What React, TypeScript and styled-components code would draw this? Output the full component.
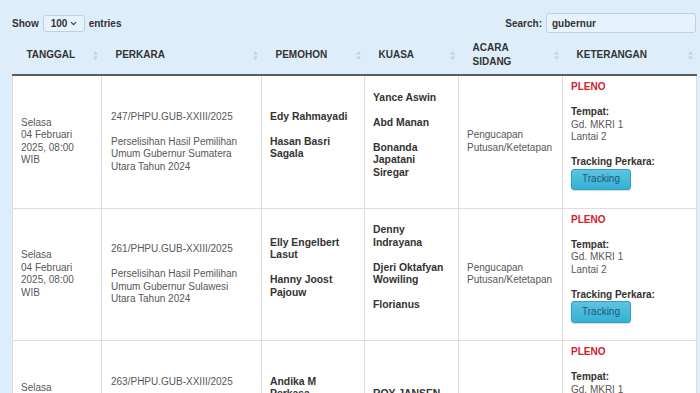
import React from 'react';
import styled, {createGlobalStyle} from 'styled-components';
import {ChevronDown} from 'lucide-react';

type Hearing = {
    day: string;
    date: string;
    number: string;
    title: string;
    pemohon: string[];
    kuasa: string[];
    acara: string;
};

const hearings: Hearing[] = [
    {
        day: 'Selasa',
        date: '04 Februari 2025, 08:00 WIB',
        number: '247/PHPU.GUB-XXIII/2025',
        title: 'Perselisihan Hasil Pemilihan Umum Gubernur Sumatera Utara Tahun 2024',
        pemohon: ['Edy Rahmayadi', 'Hasan Basri Sagala'],
        kuasa: ['Yance Aswin', 'Abd Manan', 'Bonanda Japatani Siregar'],
        acara: 'Pengucapan Putusan/Ketetapan',
    },
    {
        day: 'Selasa',
        date: '04 Februari 2025, 08:00 WIB',
        number: '261/PHPU.GUB-XXIII/2025',
        title: 'Perselisihan Hasil Pemilihan Umum Gubernur Sulawesi Utara Tahun 2024',
        pemohon: ['Elly Engelbert Lasut', 'Hanny Joost Pajouw'],
        kuasa: ['Denny Indrayana', 'Djeri Oktafyan Wowiling', 'Florianus'],
        acara: 'Pengucapan Putusan/Ketetapan',
    },
    {
        day: 'Selasa',
        date: '04 Februari 2025, 08:00 WIB',
        number: '263/PHPU.GUB-XXIII/2025',
        title: 'Perselisihan Hasil Pemilihan Umum Gubernur Jawa Tengah Tahun 2024',
        pemohon: ['Andika M Perkasa', 'Hendrar Prihadi'],
        kuasa: ['ROY JANSEN SIAGIAN'],
        acara: 'Pengucapan Putusan/Ketetapan',
    },
];

const columns = [
    {label: 'TANGGAL', width: 89},
    {label: 'PERKARA', width: 160},
    {label: 'PEMOHON', width: 103},
    {label: 'KUASA', width: 94},
    {label: 'ACARA SIDANG', width: 104},
    {label: 'KETERANGAN', width: 134},
];

const SortIcon = () => (
    <svg width="5" height="9" viewBox="0 0 5 9">
        <polygon points="2.5,0 5,3.5 0,3.5" fill="#c6d0d6"/>
        <polygon points="0,5.5 5,5.5 2.5,9" fill="#c6d0d6"/>
    </svg>
);

export default function App() {
    return (
        <>
            <GlobalStyle/>
            <Page>
                <Toolbar>
                    <Control>
                        Show
                        <FakeSelect>
                            100
                            <ChevronDown size={9} strokeWidth={3}/>
                        </FakeSelect>
                        entries
                    </Control>
                    <Control>
                        Search:
                        <SearchInput type="text" value="gubernur" readOnly/>
                    </Control>
                </Toolbar>

                <Table>
                    <colgroup>
                        {columns.map(c => <col key={c.label} style={{width: c.width}}/>)}
                    </colgroup>
                    <thead>
                    <tr>
                        {columns.map(c => (
                            <HeadCell key={c.label}>
                                <HeadInner>
                                    <HeadLabel>{c.label}</HeadLabel>
                                    <SortIcon/>
                                </HeadInner>
                            </HeadCell>
                        ))}
                    </tr>
                    </thead>
                    <tbody>
                    {hearings.map(h => (
                        <tr key={h.number}>
                            <Cell>
                                <div>{h.day}</div>
                                <div>{h.date}</div>
                            </Cell>
                            <Cell padLeft={9} padRight={10}>
                                <Block>{h.number}</Block>
                                <div>{h.title}</div>
                            </Cell>
                            <Cell>
                                {h.pemohon.map(n => <Name key={n}>{n}</Name>)}
                            </Cell>
                            <Cell>
                                {h.kuasa.map(n => <Name key={n}>{n}</Name>)}
                            </Cell>
                            <Cell>{h.acara}</Cell>
                            <Cell>
                                <Status>PLENO</Status>
                                <Block>
                                    <Label>Tempat:</Label>
                                    <div>Gd. MKRI 1</div>
                                    <div>Lantai 2</div>
                                </Block>
                                <Label>Tracking Perkara:</Label>
                                <ButtonRow>
                                    <TrackingBtn type="button">Tracking</TrackingBtn>
                                </ButtonRow>
                            </Cell>
                        </tr>
                    ))}
                    </tbody>
                </Table>
            </Page>
        </>
    );
}

const GlobalStyle = createGlobalStyle`
    html, body {
        margin: 0;
        background: #ddeefa;
        overflow: hidden;
    }

    body {
        font-family: "Liberation Sans", Arial, sans-serif;
    }
`

const Page = styled.div`
    padding: 13px 4px 0 12px;
`

const Toolbar = styled.div`
    display: flex;
    justify-content: space-between;
    align-items: center;
    height: 20px;
    margin-bottom: 3px;
`

const Control = styled.label`
    display: flex;
    align-items: center;
    gap: 4px;
    font-size: 10px;
    font-weight: bold;
    color: #333;
`

const FakeSelect = styled.span`
    display: flex;
    align-items: center;
    justify-content: space-between;
    box-sizing: border-box;
    width: 42px;
    height: 17px;
    padding: 0 6px 0 7px;
    border: 1px solid #bfd1de;
    border-radius: 3px;
    background: #e6f3fc;
    color: #333;
`

const SearchInput = styled.input`
    box-sizing: border-box;
    width: 150px;
    height: 20px;
    padding: 0 5px;
    border: 1px solid #bfd1de;
    border-radius: 3px;
    background: #e6f3fc;
    font-family: "Liberation Sans", Arial, sans-serif;
    font-size: 10px;
    font-weight: bold;
    color: #333;
    outline: none;
`

const Table = styled.table`
    width: 684px;
    border-collapse: collapse;
    table-layout: fixed;
    font-size: 10px;
    line-height: 12.5px;
    color: #585858;
`

const HeadCell = styled.th`
    padding: 5px 4px 5px 14px;
    border-bottom: 2px solid #5b5d5f;
    text-align: left;
    vertical-align: middle;
    font-weight: bold;
    font-size: 10px;
    line-height: 14px;
    color: #333;
`

const HeadInner = styled.div`
    display: flex;
    align-items: center;
    justify-content: space-between;
    gap: 8px;
`

const HeadLabel = styled.span`
    min-width: 0;
`

const Cell = styled.td<{ padLeft?: number; padRight?: number }>`
    padding: 5px ${p => p.padRight ?? 8}px 5px ${p => p.padLeft ?? 8}px;
    border: 1px solid #dddddd;
    background: #fff;
    vertical-align: middle;
    overflow-wrap: break-word;
`

const Block = styled.div`
    margin-bottom: 12.5px;
`

const Name = styled.div`
    margin-bottom: 12.5px;
    font-weight: bold;
    font-size: 10.4px;
    color: #333;
`

const Status = styled.div`
    margin-bottom: 12.5px;
    font-weight: bold;
    color: #d2202c;
`

const Label = styled.div`
    font-weight: bold;
    color: #333;
`

const ButtonRow = styled.div`
    display: flex;
    margin-bottom: 12.5px;
`

const TrackingBtn = styled.button`
    padding: 3.5px 10px;
    border: 1px solid #2aa2c6;
    border-radius: 3px;
    background: linear-gradient(#5ec3e0, #34b0d6);
    box-shadow: 0 1px 1px rgba(0, 0, 0, 0.15);
    font-family: "Liberation Sans", Arial, sans-serif;
    font-size: 10px;
    line-height: 12.5px;
    color: #1d5877;
    cursor: pointer;
`
